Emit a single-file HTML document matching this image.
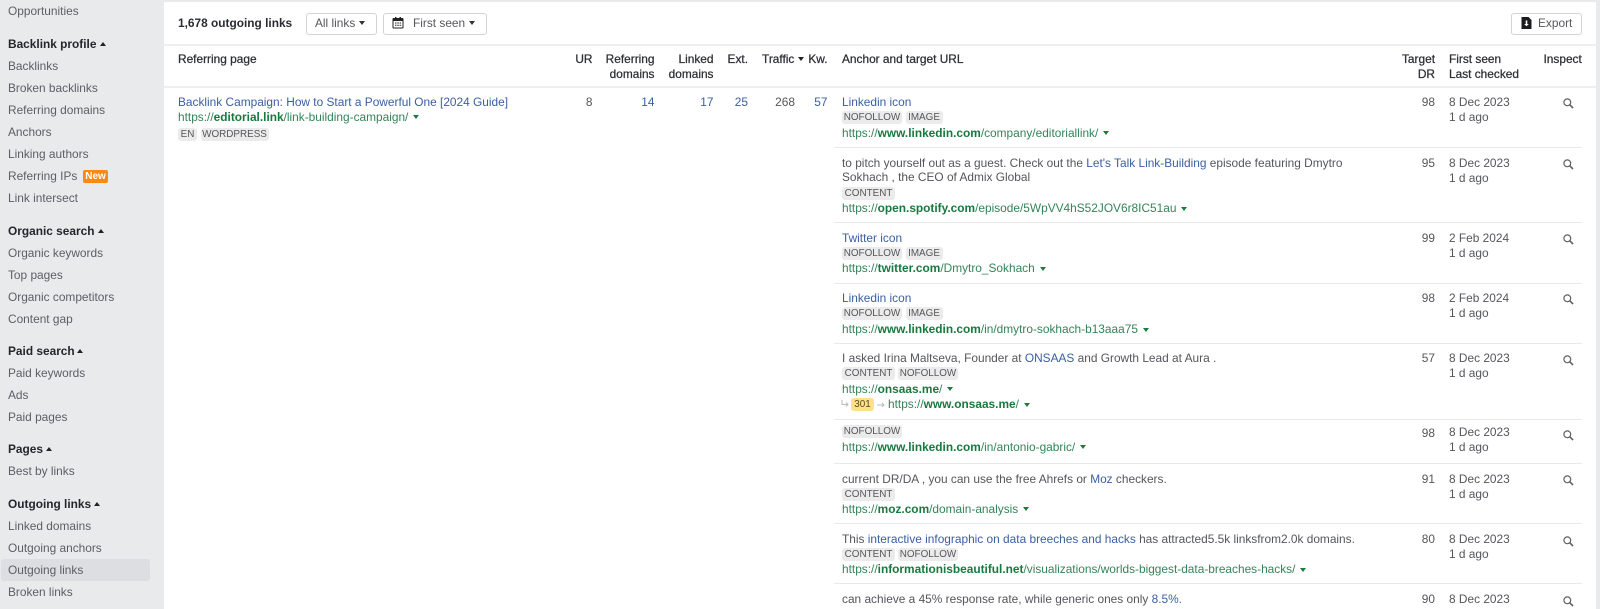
<!DOCTYPE html>
<html><head><meta charset="utf-8"><title>Outgoing links</title>
<style>
html,body{margin:0;padding:0}
html{background:#e9eaec}
body{width:1600px;height:609px;overflow:hidden;position:relative;font:11.88px/15px "Liberation Sans",sans-serif;color:#54565b;filter:blur(.3px)}
#m{position:absolute;left:164px;top:2px;width:1432px;height:607px;background:#fff}
.t,.r,.p{position:absolute;white-space:nowrap}
.r{text-align:right}
.s{left:8px;color:#5b5e66}
.h{left:8px;font-weight:bold;color:#24262b}
.hd{color:#2c2e33;font-weight:normal;-webkit-text-stroke:.25px #2c2e33}
a{color:#3a5fa3;text-decoration:none}
.g{color:#34845a}.g b{color:#18793f}
.p{height:13px;line-height:13px;font-size:9.9px;background:#ebebeb;border-radius:3px;color:#55575b;text-align:center}
.c{display:inline-block;width:0;height:0;border-left:3px solid transparent;border-right:3px solid transparent;border-top:4px solid #14803c;margin-left:5px;vertical-align:1.5px}
.up,.dn{position:absolute;width:0;height:0;border-left:3.5px solid transparent;border-right:3.5px solid transparent}
.up{border-bottom:4px solid #222}.dn{border-top:4px solid #333}
.ln{position:absolute;left:834px;width:748px;height:1px;background:#e9e9eb}
.hl{position:absolute;left:164px;width:1432px;height:2px;background:#eeeff0}
.b{position:absolute;top:12.5px;height:20px;border:1px solid #d3d4d6;border-radius:3px;background:#fff}
svg{position:absolute}
</style></head><body>
<div id="m"></div>
<div style="position:absolute;left:1px;top:559px;width:149px;height:22px;background:#dcdee2;border-radius:3px"></div>

<div class="t s" style="top:4px">Opportunities</div>
<div class="t h" style="top:37px">Backlink profile</div><div class="up" style="left:99.500px;top:42px"></div>
<div class="t s" style="top:59px">Backlinks</div>
<div class="t s" style="top:81px">Broken backlinks</div>
<div class="t s" style="top:103px">Referring domains</div>
<div class="t s" style="top:125px">Anchors</div>
<div class="t s" style="top:147px">Linking authors</div>
<div class="t s" style="top:169px">Referring IPs</div>
<div class="t" style="left:83px;top:170px;width:25px;height:13px;line-height:13px;background:#f98a13;color:#fff;font-weight:bold;font-size:10px;text-align:center;border-radius:2px">New</div>
<div class="t s" style="top:191px">Link intersect</div>
<div class="t h" style="top:224px">Organic search</div><div class="up" style="left:97.500px;top:229px"></div>
<div class="t s" style="top:246px">Organic keywords</div>
<div class="t s" style="top:268px">Top pages</div>
<div class="t s" style="top:290px">Organic competitors</div>
<div class="t s" style="top:312px">Content gap</div>
<div class="t h" style="top:344px">Paid search</div><div class="up" style="left:77px;top:349px"></div>
<div class="t s" style="top:366px">Paid keywords</div>
<div class="t s" style="top:388px">Ads</div>
<div class="t s" style="top:410px">Paid pages</div>
<div class="t h" style="top:442px">Pages</div><div class="up" style="left:45.500px;top:447px"></div>
<div class="t s" style="top:464px">Best by links</div>
<div class="t h" style="top:497px">Outgoing links</div><div class="up" style="left:94px;top:502px"></div>
<div class="t s" style="top:519px">Linked domains</div>
<div class="t s" style="top:541px">Outgoing anchors</div>
<div class="t s" style="top:563px">Outgoing links</div>
<div class="t s" style="top:585px">Broken links</div>

<div class="t" style="left:178px;top:16px;font-weight:bold;color:#2a2c30">1,678 outgoing links</div>
<div class="b" style="left:305.500px;width:69px"></div>
<div class="t" style="left:315px;top:16px;color:#55575c">All links</div><div class="dn" style="left:359px;top:21px"></div>
<div class="b" style="left:383px;width:101.500px"></div>
<svg style="left:392px;top:17px" width="12" height="12" viewBox="0 0 12 12"><path d="M3 0h1.500v2H3zM7.500 0H9v2H7.500z" fill="#222"/><rect x=".5" y="1" width="11" height="10.500" fill="#222" rx="1"/><rect x="1.500" y="4" width="9" height="6.500" fill="#fff"/><path d="M3 5.500h1.500v1H3zM5.300 5.500h1.500v1H5.300zM7.600 5.500h1.500v1H7.600zM3 7.800h1.500v1H3zM5.300 7.800h1.500v1H5.300zM7.600 7.800h1.500v1H7.600z" fill="#222"/></svg>
<div class="t" style="left:413px;top:16px;color:#55575c">First seen</div><div class="dn" style="left:469px;top:21px"></div>
<div class="b" style="left:1511px;width:69px"></div>
<svg style="left:1520.500px;top:17px" width="11" height="12" viewBox="0 0 11 12"><path d="M.5 0H7.500L10.500 3V12H.5Z" fill="#1c1c1e"/><path d="M4.700 3.500h1.600v3.500h1.500L5.500 9.300 3.200 7h1.500Z" fill="#fff"/></svg>
<div class="t" style="left:1538px;top:16px;color:#55575c">Export</div>

<div class="hl" style="top:44px"></div>
<div class="hl" style="top:86px"></div>

<div class="t hd" style="left:178px;top:51.500px">Referring page</div>
<div class="r hd" style="right:1007.500px;top:51.500px">UR</div>
<div class="r hd" style="right:945.500px;top:51.500px">Referring<br>domains</div>
<div class="r hd" style="right:886.500px;top:51.500px">Linked<br>domains</div>
<div class="r hd" style="right:852px;top:51.500px">Ext.</div>
<div class="t hd" style="left:762px;top:51.500px">Traffic</div><div class="dn" style="left:798px;top:57px;border-top-color:#222"></div>
<div class="r hd" style="right:772.500px;top:51.500px">Kw.</div>
<div class="t hd" style="left:842px;top:51.500px">Anchor and target URL</div>
<div class="r hd" style="right:165px;top:51.500px">Target<br>DR</div>
<div class="t hd" style="left:1449px;top:51.500px">First seen<br>Last checked</div>
<div class="t hd" style="left:1543.500px;top:51.500px">Inspect</div>

<div class="t" style="left:178px;top:94.500px"><a>Backlink Campaign: How to Start a Powerful One [2024 Guide]</a></div>
<div class="t g" style="left:178px;top:109.500px">https://<b>editorial.link</b>/link-building-campaign/<i class="c"></i></div>
<div class="p" style="left:178px;top:127.500px;width:19px">EN</div>
<div class="p" style="left:200.500px;top:127.500px;width:68px">WORDPRESS</div>
<div class="r" style="right:1007.500px;top:94.500px">8</div>
<div class="r" style="right:945.500px;top:94.500px"><a>14</a></div>
<div class="r" style="right:886.500px;top:94.500px"><a>17</a></div>
<div class="r" style="right:852px;top:94.500px"><a>25</a></div>
<div class="r" style="right:805px;top:94.500px">268</div>
<div class="r" style="right:772.500px;top:94.500px"><a>57</a></div>

<!-- row 1 -->
<div class="t" style="left:842px;top:94.500px"><a>Linkedin icon</a></div>
<div class="p" style="left:842px;top:111px;width:60px">NOFOLLOW</div><div class="p" style="left:905.500px;top:111px;width:37px">IMAGE</div>
<div class="t g" style="left:842px;top:125.500px">https://<b>www.linkedin.com</b>/company/editoriallink/<i class="c"></i></div>
<div class="ln" style="top:147px"></div>
<!-- row 2 -->
<div class="t" style="left:842px;top:156px">to pitch yourself out as a guest. Check out the <a>Let's Talk Link-Building</a> episode featuring Dmytro</div>
<div class="t" style="left:842px;top:170px">Sokhach , the CEO of Admix Global</div>
<div class="p" style="left:842px;top:186.500px;width:53px">CONTENT</div>
<div class="t g" style="left:842px;top:201px">https://<b>open.spotify.com</b>/episode/5WpVV4hS52JOV6r8IC51au<i class="c"></i></div>
<div class="ln" style="top:222px"></div>
<!-- row 3 -->
<div class="t" style="left:842px;top:231px"><a>Twitter icon</a></div>
<div class="p" style="left:842px;top:246.500px;width:60px">NOFOLLOW</div><div class="p" style="left:905.500px;top:246.500px;width:37px">IMAGE</div>
<div class="t g" style="left:842px;top:261px">https://<b>twitter.com</b>/Dmytro_Sokhach<i class="c"></i></div>
<div class="ln" style="top:282.500px"></div>
<!-- row 4 -->
<div class="t" style="left:842px;top:291px"><a>Linkedin icon</a></div>
<div class="p" style="left:842px;top:307px;width:60px">NOFOLLOW</div><div class="p" style="left:905.500px;top:307px;width:37px">IMAGE</div>
<div class="t g" style="left:842px;top:322px">https://<b>www.linkedin.com</b>/in/dmytro-sokhach-b13aaa75<i class="c"></i></div>
<div class="ln" style="top:343px"></div>
<!-- row 5 -->
<div class="t" style="left:842px;top:350.500px">I asked Irina Maltseva, Founder at <a>ONSAAS</a> and Growth Lead at Aura .</div>
<div class="p" style="left:842px;top:367px;width:53px">CONTENT</div><div class="p" style="left:898px;top:367px;width:60px">NOFOLLOW</div>
<div class="t g" style="left:842px;top:381.500px">https://<b>onsaas.me</b>/<i class="c"></i></div>
<svg style="left:841px;top:399px" width="8" height="9" viewBox="0 0 8 9"><path d="M1 1V5.500H7M5 3.500 7 5.500 5 7.500" fill="none" stroke="#bbb"/></svg>
<div class="p" style="left:851px;top:397.500px;width:23px;background:#fde08b;color:#5a4a1a">301</div>
<svg style="left:877px;top:401px" width="8" height="8" viewBox="0 0 8 8"><path d="M0 4H7M5 2 7 4 5 6" fill="none" stroke="#bbb"/></svg>
<div class="t g" style="left:888px;top:397px">https://<b>www.onsaas.me</b>/<i class="c"></i></div>
<div class="ln" style="top:418.500px"></div>
<!-- row 6 -->
<div class="p" style="left:842px;top:425px;width:60px">NOFOLLOW</div>
<div class="t g" style="left:842px;top:439.500px">https://<b>www.linkedin.com</b>/in/antonio-gabric/<i class="c"></i></div>
<div class="ln" style="top:463px"></div>
<!-- row 7 -->
<div class="t" style="left:842px;top:471.500px">current DR/DA , you can use the free Ahrefs or <a>Moz</a> checkers.</div>
<div class="p" style="left:842px;top:487.500px;width:53px">CONTENT</div>
<div class="t g" style="left:842px;top:501.500px">https://<b>moz.com</b>/domain-analysis<i class="c"></i></div>
<div class="ln" style="top:523px"></div>
<!-- row 8 -->
<div class="t" style="left:842px;top:531.500px">This <a>interactive infographic on data breeches and hacks</a> has attracted5.5k linksfrom2.0k domains.</div>
<div class="p" style="left:842px;top:548px;width:53px">CONTENT</div><div class="p" style="left:898px;top:548px;width:60px">NOFOLLOW</div>
<div class="t g" style="left:842px;top:562px">https://<b>informationisbeautiful.net</b>/visualizations/worlds-biggest-data-breaches-hacks/<i class="c"></i></div>
<div class="ln" style="top:583px"></div>
<!-- row 9 -->
<div class="t" style="left:842px;top:591.500px">can achieve a 45% response rate, while generic ones only <a>8.5%.</a></div>

<div class="r" style="right:165px;top:94.500px">98</div><div class="t" style="left:1449px;top:94.500px">8 Dec 2023<br>1 d ago</div>
<div class="r" style="right:165px;top:156px">95</div><div class="t" style="left:1449px;top:156px">8 Dec 2023<br>1 d ago</div>
<div class="r" style="right:165px;top:231px">99</div><div class="t" style="left:1449px;top:231px">2 Feb 2024<br>1 d ago</div>
<div class="r" style="right:165px;top:291px">98</div><div class="t" style="left:1449px;top:291px">2 Feb 2024<br>1 d ago</div>
<div class="r" style="right:165px;top:350.500px">57</div><div class="t" style="left:1449px;top:350.500px">8 Dec 2023<br>1 d ago</div>
<div class="r" style="right:165px;top:426px">98</div><div class="t" style="left:1449px;top:424.500px">8 Dec 2023<br>1 d ago</div>
<div class="r" style="right:165px;top:471.500px">91</div><div class="t" style="left:1449px;top:471.500px">8 Dec 2023<br>1 d ago</div>
<div class="r" style="right:165px;top:531.500px">80</div><div class="t" style="left:1449px;top:531.500px">8 Dec 2023<br>1 d ago</div>
<div class="r" style="right:165px;top:591.500px">90</div><div class="t" style="left:1449px;top:591.500px">8 Dec 2023</div>

<svg width="0" height="0"><defs><g id="q"><circle cx="4.300" cy="4.300" r="3.400" fill="none" stroke="#5f6165" stroke-width="1.200"/><path d="M6.800 6.800 10 10" stroke="#5f6165" stroke-width="1.600"/></g></defs></svg>
<svg style="left:1563px;top:98px" width="11" height="11"><use href="#q"/></svg>
<svg style="left:1563px;top:159px" width="11" height="11"><use href="#q"/></svg>
<svg style="left:1563px;top:234px" width="11" height="11"><use href="#q"/></svg>
<svg style="left:1563px;top:294px" width="11" height="11"><use href="#q"/></svg>
<svg style="left:1563px;top:355px" width="11" height="11"><use href="#q"/></svg>
<svg style="left:1563px;top:430px" width="11" height="11"><use href="#q"/></svg>
<svg style="left:1563px;top:475px" width="11" height="11"><use href="#q"/></svg>
<svg style="left:1563px;top:536px" width="11" height="11"><use href="#q"/></svg>
<svg style="left:1563px;top:596px" width="11" height="11"><use href="#q"/></svg>
</body></html>
